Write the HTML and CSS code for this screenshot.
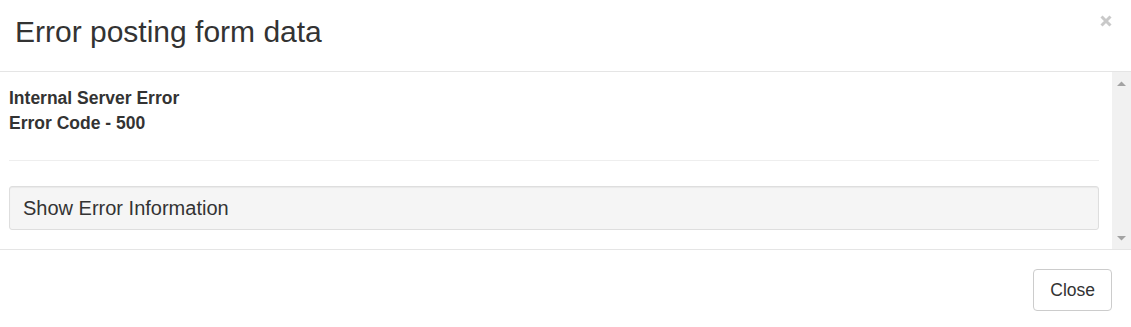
FILE: index.html
```html
<!DOCTYPE html>
<html>
<head>
<meta charset="utf-8">
<link rel="stylesheet" href="styles.css">
</head>
<body>
<div class="modal">
  <div class="modal-header">
    <h3 class="modal-title">Error posting form data</h3>
    <button class="close" aria-label="Close">
      <svg width="12" height="12" viewBox="0 0 12 12"><path d="M1.5 1.5 L10.5 10.5 M10.5 1.5 L1.5 10.5" stroke="#c9c9c9" stroke-width="3" stroke-linecap="butt"/></svg>
    </button>
  </div>
  <div class="modal-body-wrap">
    <div class="modal-body">
      <div class="error-text">
        <div>Internal Server Error</div>
        <div>Error Code - 500</div>
      </div>
      <hr class="divider">
      <div class="well">Show Error Information</div>
    </div>
    <div class="scrollbar">
      <svg class="arrow" width="19" height="19" viewBox="0 0 19 19"><path d="M5 14 L9.5 9.5 L14 14 Z" fill="#a3a3a3"/></svg>
      <svg class="arrow" width="19" height="19" viewBox="0 0 19 19"><path d="M5 6 L14 6 L9.5 10.5 Z" fill="#a3a3a3"/></svg>
    </div>
  </div>
  <div class="modal-footer">
    <button class="btn">Close</button>
  </div>
</div>
</body>
</html>
```
FILE: styles.css
```css
* { box-sizing: border-box; }
html, body { margin: 0; padding: 0; background: #fff; }
body {
  font-family: "Liberation Sans", Arial, Helvetica, sans-serif;
  color: #333;
}
.modal {
  width: 1131px;
  height: 327px;
  display: flex;
  flex-direction: column;
  background: #fff;
}
.modal-header {
  height: 72px;
  border-bottom: 1px solid #e5e5e5;
  padding: 15px 19px 0 15px;
  display: flex;
  justify-content: space-between;
  align-items: flex-start;
}
.modal-title {
  margin: 0;
  font-size: 30px;
  font-weight: normal;
  line-height: 33px;
  color: #333;
}
.close {
  border: 0;
  background: transparent;
  padding: 0;
  margin-top: 0;
  margin-right: 0;
  width: 12px;
  height: 12px;
  display: block;
  line-height: 0;
}
.modal-body-wrap {
  height: 178px;
  border-bottom: 1px solid #e5e5e5;
  display: flex;
}
.modal-body {
  flex: 1;
  padding: 14px 13px 0 9px;
}
.error-text {
  font-size: 17.5px;
  font-weight: bold;
  line-height: 25px;
}
.divider {
  border: 0;
  border-top: 1px solid #eeeeee;
  margin: 24px 0 25px 0;
  height: 0;
}
.well {
  height: 44px;
  background: #f5f5f5;
  border: 1px solid #dedede;
  border-radius: 3px;
  box-shadow: inset 0 1px 1px rgba(0,0,0,0.05);
  padding: 9px 13px;
  font-size: 20px;
  line-height: 24px;
  color: #333;
}
.scrollbar {
  width: 19px;
  background: #f1f1f1;
  display: flex;
  flex-direction: column;
  justify-content: space-between;
}
.arrow { display: block; }
.modal-footer {
  flex: 1;
  padding: 19px 19px 0 0;
  display: flex;
  justify-content: flex-end;
  align-items: flex-start;
}
.btn {
  height: 42px;
  padding: 0 16px;
  font-family: "Liberation Sans", Arial, Helvetica, sans-serif;
  font-size: 17.5px;
  color: #333;
  background: #fff;
  border: 1px solid #ccc;
  border-radius: 4px;
}
```
